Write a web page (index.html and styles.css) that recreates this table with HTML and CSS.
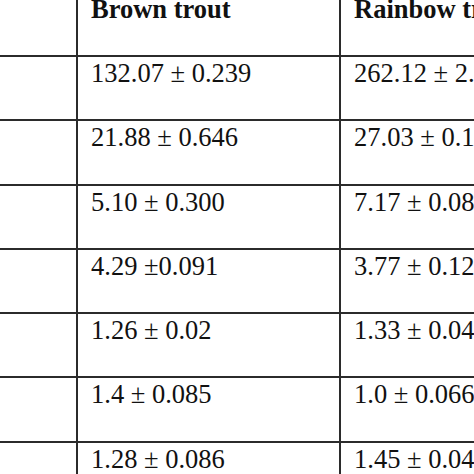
FILE: index.html
```html
<!DOCTYPE html>
<html>
<head>
<meta charset="utf-8">
<link rel="stylesheet" href="styles.css">
</head>
<body>
<div class="table">
  <div class="cell"></div>
  <div class="cell head">Brown trout</div>
  <div class="cell head">Rainbow trout</div>

  <div class="cell"></div>
  <div class="cell">132.07 ± 0.239</div>
  <div class="cell">262.12 ± 2.541</div>

  <div class="cell"></div>
  <div class="cell">21.88 ± 0.646</div>
  <div class="cell">27.03 ± 0.193</div>

  <div class="cell"></div>
  <div class="cell">5.10 ± 0.300</div>
  <div class="cell">7.17 ± 0.084</div>

  <div class="cell"></div>
  <div class="cell">4.29 ±0.091</div>
  <div class="cell">3.77 ± 0.125</div>

  <div class="cell"></div>
  <div class="cell">1.26 ± 0.02</div>
  <div class="cell">1.33 ± 0.04</div>

  <div class="cell"></div>
  <div class="cell">1.4 ± 0.085</div>
  <div class="cell">1.0 ± 0.066</div>

  <div class="cell"></div>
  <div class="cell">1.28 ± 0.086</div>
  <div class="cell">1.45 ± 0.04</div>
</div>
</body>
</html>
```
FILE: styles.css
```css
html, body {
  margin: 0;
  padding: 0;
  background: #ffffff;
  overflow: hidden;
  width: 474px;
  height: 474px;
}

.table {
  display: grid;
  grid-template-columns: 94px 261px 300px;
  grid-auto-rows: 62.3px;
  gap: 2px;
  padding: 2px;
  background: #2b2b2b;
  width: max-content;
  margin: -9.3px 0 0 -20px;
  font-family: "Liberation Serif", "Times New Roman", serif;
  font-size: 26.5px;
  line-height: 30px;
  color: #111111;
}

.cell {
  background: #ffffff;
  padding: 1px 0 0 13px;
  white-space: nowrap;
  overflow: hidden;
}

.head {
  font-weight: bold;
}
```
